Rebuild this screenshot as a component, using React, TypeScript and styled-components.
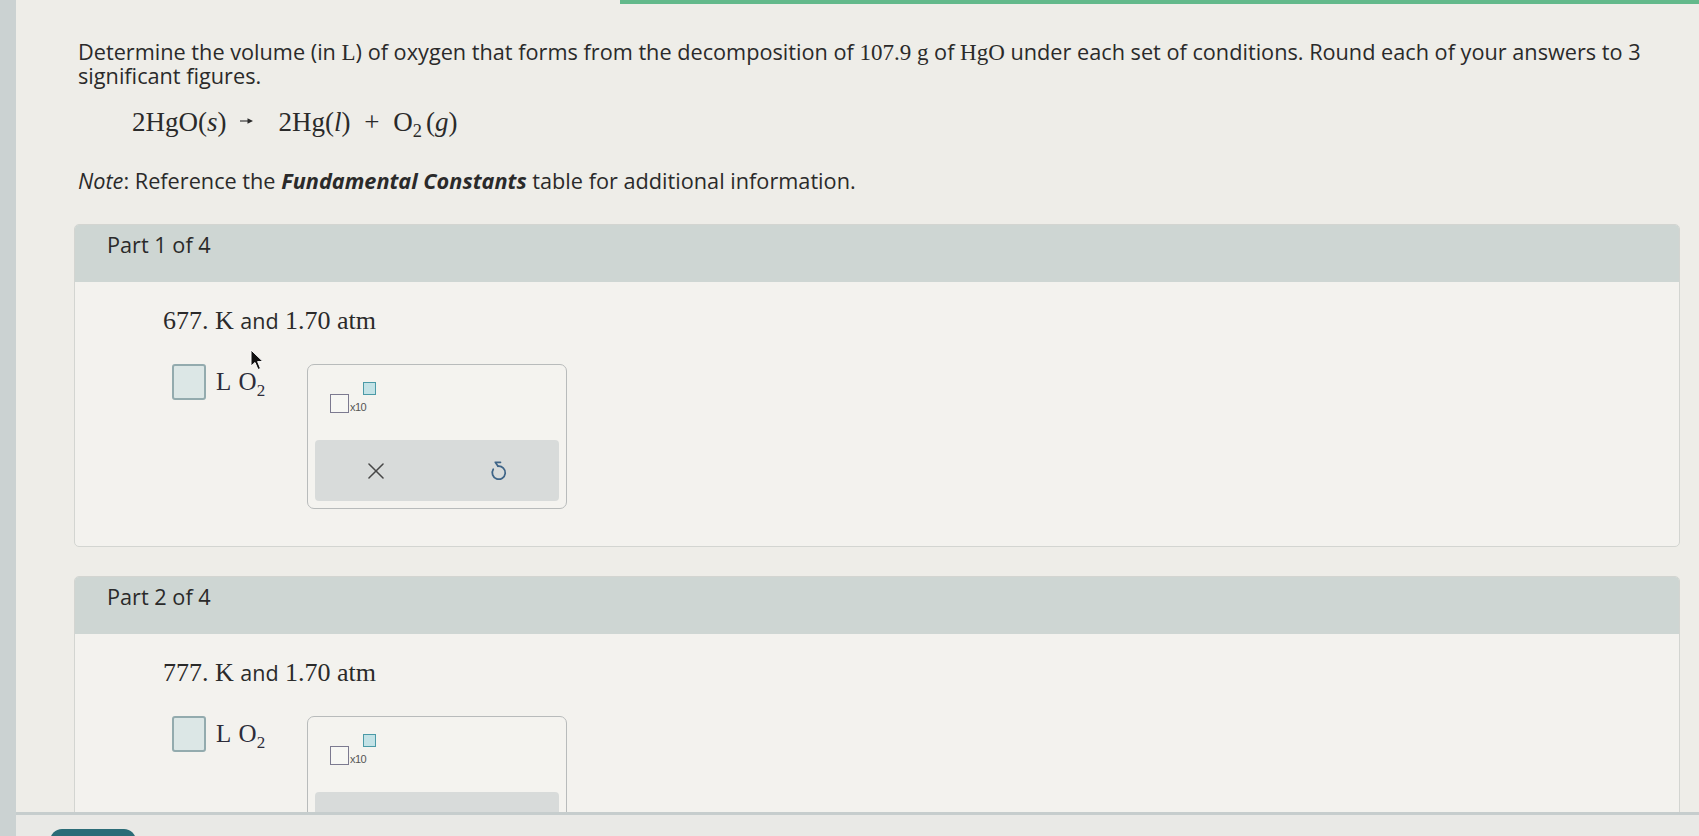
import styled, { createGlobalStyle } from "styled-components";

const GlobalStyle = createGlobalStyle`
  html, body {
    margin: 0;
    padding: 0;
  }
  body {
    background: #eeede8;
    font-family: "Open Sans", "Liberation Sans", sans-serif;
    color: #2a2a2a;
    overflow: hidden;
  }
`;

const Screen = styled.div`
  position: relative;
  width: 1699px;
  height: 836px;
  display: flex;
  overflow: hidden;
`;

const SideStrip = styled.div`
  width: 16px;
  flex-shrink: 0;
  background: #cbd2d2;
`;

const Column = styled.div`
  flex: 1;
  min-width: 0;
  display: flex;
  flex-direction: column;
`;

const Workspace = styled.main`
  flex: 1;
  min-height: 0;
  overflow: hidden;
`;

const AccentBar = styled.div`
  height: 4px;
  margin-left: 604px;
  background: #63b98b;
`;

const Content = styled.div`
  padding: 36px 19px 0 58px;
`;

const Prose = styled.p`
  margin: 0;
  padding-left: 4px;
  font-size: 21.7px;
  line-height: 23px;
`;

const Math = styled.span`
  font-family: "Liberation Serif", "Times New Roman", serif;
  font-size: 23px;
  line-height: 1;
`;

const Equation = styled.div`
  margin: 20px 0 0 58px;
  font-family: "Liberation Serif", "Times New Roman", serif;
  font-size: 27px;
  line-height: 30px;
  word-spacing: 7px;
`;

const Arrow = styled.svg`
  width: 13px;
  height: 8px;
  margin: 0 26px 0 13px;
  vertical-align: 6px;
`;

const Phase = styled.span`
  margin-left: 4px;
`;

const Sub = styled.sub`
  font-size: 0.68em;
  vertical-align: -0.35em;
  line-height: 0;
`;

const Note = styled(Prose)`
  margin-top: 32px;
`;

const Panel = styled.section<{ $gap?: number }>`
  margin-top: ${(p) => p.$gap ?? 32}px;
  border: 1px solid #d3d5d1;
  border-radius: 5px;
  background: #f3f2ee;
  overflow: hidden;
`;

const PanelHeader = styled.div`
  box-sizing: border-box;
  height: 57px;
  padding: 8px 32px;
  background: #ced6d3;
  font-size: 21.7px;
  line-height: 24px;
`;

const PanelBody = styled.div`
  box-sizing: border-box;
  height: 264px;
  padding: 27px 0 0 88px;
`;

const Prompt = styled.div`
  font-family: "Liberation Serif", "Times New Roman", serif;
  font-size: 26px;
  line-height: 24px;
`;

const Word = styled.span`
  font-family: "Open Sans", "Liberation Sans", sans-serif;
  font-size: 21.5px;
`;

const AnswerRow = styled.div`
  display: flex;
  align-items: flex-start;
  margin-top: 31px;
`;

const UnitGroup = styled.div`
  width: 135px;
  margin-left: 9px;
  display: flex;
  align-items: center;
  gap: 10px;
`;

const AnswerBox = styled.div`
  box-sizing: border-box;
  width: 34px;
  height: 36px;
  border: 2px solid #93abae;
  border-radius: 3px;
  background: #dce7e6;
`;

const Unit = styled.span`
  font-family: "Liberation Serif", "Times New Roman", serif;
  font-size: 25px;
  word-spacing: 2px;
  color: #2d2d3a;
`;

const ToolPanel = styled.div`
  box-sizing: border-box;
  width: 260px;
  height: 145px;
  padding: 7px;
  border: 1.5px solid #b8bbbb;
  border-radius: 7px;
  background: #f4f3ef;
  display: flex;
  flex-direction: column;
`;

const Notation = styled.div`
  box-sizing: border-box;
  height: 68px;
  padding: 10px 0 0 15px;
  display: flex;
  align-items: flex-start;
`;

const MantissaBox = styled.div`
  width: 19px;
  height: 19px;
  margin-top: 12px;
  box-sizing: border-box;
  border: 1.5px solid #7c7a90;
  background: #f7f7f4;
`;

const Times10 = styled.span`
  margin-top: 18px;
  margin-left: 1px;
  font-family: "Liberation Sans", Arial, sans-serif;
  font-size: 11px;
  line-height: 14px;
  letter-spacing: -0.5px;
  color: #555;
`;

const ExponentBox = styled.div`
  width: 13px;
  height: 13px;
  margin-left: -3px;
  box-sizing: border-box;
  border: 1.5px solid #4b9aa7;
  background: #c3e2e6;
`;

const ButtonBar = styled.div`
  flex: 1;
  display: grid;
  grid-template-columns: 1fr 1fr;
  align-items: center;
  justify-items: center;
  border-radius: 4px;
  background: #d8dbda;
`;

const IconButton = styled.button<{ $tint: string }>`
  display: flex;
  align-items: center;
  justify-content: center;
  width: 32px;
  height: 32px;
  padding: 0;
  border: none;
  background: none;
  color: ${(p) => p.$tint};
  cursor: pointer;

  & svg {
    width: 26px;
    height: 26px;
  }
`;

const Footer = styled.footer`
  height: 21px;
  flex-shrink: 0;
  border-top: 3px solid #c6cdcd;
  background: #e9e9e6;
  overflow: hidden;
`;

const FooterButton = styled.div`
  width: 86px;
  height: 24px;
  margin: 14px 0 0 34px;
  border-radius: 12px 12px 0 0;
  background: #2b6c77;
`;

const Pointer = styled.svg`
  position: absolute;
  left: 250px;
  top: 349px;
  width: 15px;
  height: 22px;
`;

function ClearIcon() {
  return (
    <svg viewBox="0 0 24 24" fill="none" stroke="currentColor" strokeWidth="1.4" strokeLinecap="round">
      <path d="M5.5 5.5 L18.5 18.5 M18.5 5.5 L5.5 18.5" />
    </svg>
  );
}

function UndoIcon() {
  return (
    <svg viewBox="0 0 24 24" fill="none" stroke="currentColor" strokeWidth="1.6" strokeLinecap="round" strokeLinejoin="round">
      <path d="M7.6 10.4 A6 6 0 1 0 12 7.6" />
      <path d="M12 7.6 L9.5 4 L14.3 4" />
    </svg>
  );
}

type PartProps = {
  index: number;
  temperature: string;
  gap?: number;
};

function Part({ index, temperature, gap }: PartProps) {
  return (
    <Panel $gap={gap}>
      <PanelHeader>Part {index} of 4</PanelHeader>
      <PanelBody>
        <Prompt>
          {temperature}. K <Word>and</Word> 1.70 atm
        </Prompt>
        <AnswerRow>
          <UnitGroup>
            <AnswerBox />
            <Unit>
              L O<Sub>2</Sub>
            </Unit>
          </UnitGroup>
          <ToolPanel>
            <Notation>
              <MantissaBox />
              <Times10>x10</Times10>
              <ExponentBox />
            </Notation>
            <ButtonBar>
              <IconButton $tint="#474747" aria-label="Clear">
                <ClearIcon />
              </IconButton>
              <IconButton $tint="#3e6487" aria-label="Undo">
                <UndoIcon />
              </IconButton>
            </ButtonBar>
          </ToolPanel>
        </AnswerRow>
      </PanelBody>
    </Panel>
  );
}

export default function App() {
  return (
    <>
      <GlobalStyle />
      <Screen>
        <SideStrip />
        <Column>
          <Workspace>
            <AccentBar />
            <Content>
              <Prose>
                <span>Determine the volume (in </span>
                <Math>L</Math>
                <span>) of oxygen that forms from the decomposition of </span>
                <Math>107.9 g</Math>
                <span> of </span>
                <Math>HgO</Math>
                <span> under each set of conditions. Round each of your answers to 3</span>{" "}
                <span>significant figures.</span>
              </Prose>
              <Equation>
                2HgO(<i>s</i>)
                <Arrow viewBox="0 0 13 8" aria-label="yields">
                  <path d="M0 4 H9" stroke="#2a2a2a" strokeWidth="1.1" />
                  <path d="M7.5 1.2 L13 4 L7.5 6.8 Z" fill="#2a2a2a" />
                </Arrow>
                2Hg(<i>l</i>) + O<Sub>2</Sub>
                <Phase>
                  (<i>g</i>)
                </Phase>
              </Equation>
              <Note>
                <i>Note</i>: Reference the <b><i>Fundamental Constants</i></b> table for
                additional information.
              </Note>
              <Part index={1} temperature="677" />
              <Part index={2} temperature="777" gap={29} />
            </Content>
          </Workspace>
          <Footer>
            <FooterButton />
          </Footer>
        </Column>
        <Pointer viewBox="0 0 15 22">
          <path d="M1 1 L1 17 L5 13.5 L8 20.5 L10.5 19.5 L7.6 12.6 L13 12.6 Z" fill="#111" stroke="#fff" strokeWidth="1" />
        </Pointer>
      </Screen>
    </>
  );
}
